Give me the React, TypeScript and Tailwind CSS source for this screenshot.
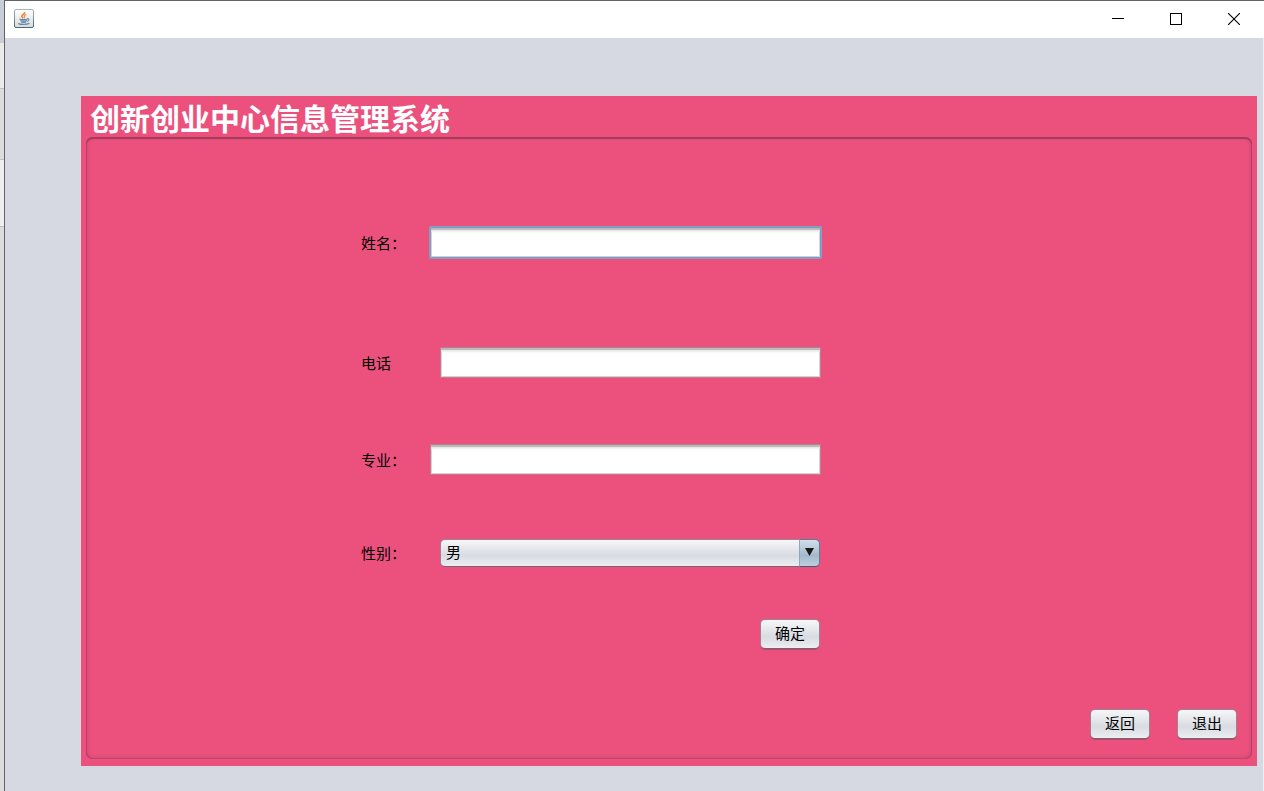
import { useState } from 'react';
import type { ReactNode } from 'react';

const labelClass = 'shrink-0 text-[15px] leading-[20px]';

const fieldClass =
  'h-[31px] min-w-0 flex-1 rounded-[1px] border border-[#c9798f] border-t-[#b1838f] bg-white px-[6px] text-[15px] leading-[20px] shadow-[inset_0_2px_1px_#b9b9b9,inset_0_4px_2px_#ececec,inset_1px_-1px_0_#d5cfd1,inset_-1px_0_0_#d5cfd1] outline-none focus:border-[#7b9cc6] focus:ring-1 focus:ring-[#8a9cc8]';

function JavaIcon() {
  return (
    <svg width="20" height="19" viewBox="0 0 20 19" fill="none" aria-hidden="true">
      <defs>
        <linearGradient id="tile" x1="0" y1="0" x2="0" y2="1">
          <stop offset="0" stopColor="#ffffff" />
          <stop offset="1" stopColor="#d9dadc" />
        </linearGradient>
        <linearGradient id="tileEdge" x1="0" y1="0" x2="0" y2="1">
          <stop offset="0" stopColor="#a9b4bf" />
          <stop offset="1" stopColor="#4c667c" />
        </linearGradient>
      </defs>
      <rect x="0.5" y="0.5" width="19" height="18" rx="1.5" fill="url(#tile)" stroke="url(#tileEdge)" />
      <path d="M10.6 3.2c.7 1.5-2.8 2.4-2.8 4 0 .9.8 1.4 1.3 2.1" stroke="#ef8134" strokeWidth="1.6" />
      <path d="M12.2 5.4c-1.5.6-2.3 1.2-1.8 2.1.4.7.3 1.2-.4 1.8" stroke="#f0954f" strokeWidth="1.4" />
      <path d="M5.4 9.9c2 .7 6.2.7 8.3 0M6.3 11.5c1.800.6 5 .6 6.600 0M6.9 13.1c1.6.5 3.9.5 5.3 0" stroke="#5f86a6" strokeWidth="1.1" />
      <path d="M13.2 9.6c2.3-.4 2.4 1.9-.2 2.8" stroke="#6f93b0" strokeWidth="1.1" />
      <path d="M4.2 14.4c1.2 1.4 9 1.4 11.2-.2" stroke="#5f86a6" strokeWidth="1.3" />
    </svg>
  );
}

function TitleBar() {
  return (
    <header className="flex h-[37px] items-center justify-between bg-white pr-[1px] pb-[2px] pl-[9px]">
      <JavaIcon />
      <div className="flex h-full">
        <button type="button" aria-label="最小化" className="flex w-[58px] items-center justify-center">
          <svg width="12" height="12" aria-hidden="true">
            <path d="M0 5.5h12" stroke="#000" />
          </svg>
        </button>
        <button type="button" aria-label="最大化" className="flex w-[58px] items-center justify-center">
          <svg width="12" height="12" fill="none" aria-hidden="true">
            <rect x="0.5" y="0.5" width="11" height="11" stroke="#000" />
          </svg>
        </button>
        <button type="button" aria-label="关闭" className="flex w-[58px] items-center justify-center">
          <svg width="12" height="12" aria-hidden="true">
            <path d="M0 0l12 12M12 0L0 12" stroke="#000" strokeWidth="1.1" />
          </svg>
        </button>
      </div>
    </header>
  );
}

// Slice of the window behind this one
function BackgroundStrip() {
  return (
    <div className="flex w-[4px] shrink-0 flex-col bg-[#dcdcdc]">
      <div className="h-[43px] bg-[#c9cdd6]" />
      <div className="h-[46px] border-b border-[#c2c2c2] bg-[#ebebeb]" />
      <div className="h-[71px] border-b border-[#c2c2c2] bg-[#dcdcdc]" />
      <div className="h-[67px] border-b border-[#c2c2c2] bg-[#efefef]" />
    </div>
  );
}

function PushButton({ children, onClick }: { children: ReactNode; onClick?: () => void }) {
  return (
    <button
      type="button"
      onClick={onClick}
      className="h-[30px] w-[60px] rounded-[5px] border border-[#a0828d] border-b-[#74656e] bg-linear-to-b from-[#f7f7f9] via-[#d8dbe1] via-60% to-[#eceef1] pb-[2px] text-[15px] leading-[20px] shadow-[0_1px_0_#c0476c]"
    >
      {children}
    </button>
  );
}

export default function App() {
  const [name, setName] = useState('');
  const [phone, setPhone] = useState('');
  const [major, setMajor] = useState('');
  const [gender, setGender] = useState('男');

  const reset = () => {
    setName('');
    setPhone('');
    setMajor('');
    setGender('男');
  };

  return (
    <div className="flex min-h-screen font-['Noto_Sans_CJK_SC',sans-serif] text-black">
      <BackgroundStrip />
      <div className="flex min-w-0 flex-1 flex-col border-t border-l border-[#636363] bg-[#d6d9e1]">
        <TitleBar />
        <main className="flex flex-1 flex-col border-r border-r-[#f0f0f2] pt-[58px] pr-[6px] pb-[25px] pl-[76px]">
          <section className="flex flex-1 flex-col bg-[#ec517e] px-[5px] pb-[7px]">
            <h1 className="flex h-[41px] items-center pl-[4px] text-[30px] leading-[36px] font-bold text-white">
              创新创业中心信息管理系统
            </h1>
            <div className="flex flex-1 flex-col rounded-[7px] shadow-[inset_0_2px_0_#a63c5d,inset_1px_0_0_#b34266,inset_-1px_0_0_#b34266,inset_0_-1px_0_#c0476c,inset_0_0_5px_#b34266]">
              <form className="flex flex-col pt-[90px] pr-[431px] pl-[275px]" onSubmit={(e) => e.preventDefault()}>
                <div className="flex items-center">
                  <label htmlFor="name" className={`${labelClass} w-[69px]`}>姓名：</label>
                  <input id="name" type="text" autoFocus value={name} onChange={(e) => setName(e.target.value)} className={fieldClass} />
                </div>
                <div className="mt-[89px] flex items-center">
                  <label htmlFor="phone" className={`${labelClass} w-[79px]`}>电话</label>
                  <input id="phone" type="text" value={phone} onChange={(e) => setPhone(e.target.value)} className={fieldClass} />
                </div>
                <div className="mt-[66px] flex items-center">
                  <label htmlFor="major" className={`${labelClass} w-[69px]`}>专业：</label>
                  <input id="major" type="text" value={major} onChange={(e) => setMajor(e.target.value)} className={fieldClass} />
                </div>
                <div className="mt-[64px] flex items-center pr-[1px]">
                  <label htmlFor="gender" className={`${labelClass} w-[79px]`}>性别：</label>
                  <div className="relative flex-1">
                    <select
                      id="gender"
                      value={gender}
                      onChange={(e) => setGender(e.target.value)}
                      className="block h-[28px] w-full appearance-none rounded-[5px] border border-[#a0828d] border-b-[#74656e] bg-linear-to-b from-[#f7f7f9] via-[#d8dbe1] via-60% to-[#eceef1] pb-[2px] pl-[5px] text-[15px] leading-[20px] outline-none"
                    >
                      <option>男</option>
                      <option>女</option>
                    </select>
                    <span className="pointer-events-none absolute inset-y-0 right-0 flex w-[21px] items-center justify-center rounded-r-[5px] border border-[#5d7a96] border-b-[#3f5a74] border-l-[#8fa6ba] bg-linear-to-b from-[#d3dfe9] via-[#a3b9cb] via-60% to-[#bdd0e0] pb-[2px]">
                      <svg width="9" height="8" aria-hidden="true">
                        <path d="M0 0h9L4.5 8z" fill="#1a1a1a" />
                      </svg>
                    </span>
                  </div>
                </div>
                <div className="mt-[52px] flex justify-end pr-[1px]">
                  <PushButton>确定</PushButton>
                </div>
              </form>
              <div className="mt-auto flex justify-end gap-[27px] pr-[15px] pb-[20px]">
                <PushButton onClick={reset}>返回</PushButton>
                <PushButton>退出</PushButton>
              </div>
            </div>
          </section>
        </main>
      </div>
    </div>
  );
}
